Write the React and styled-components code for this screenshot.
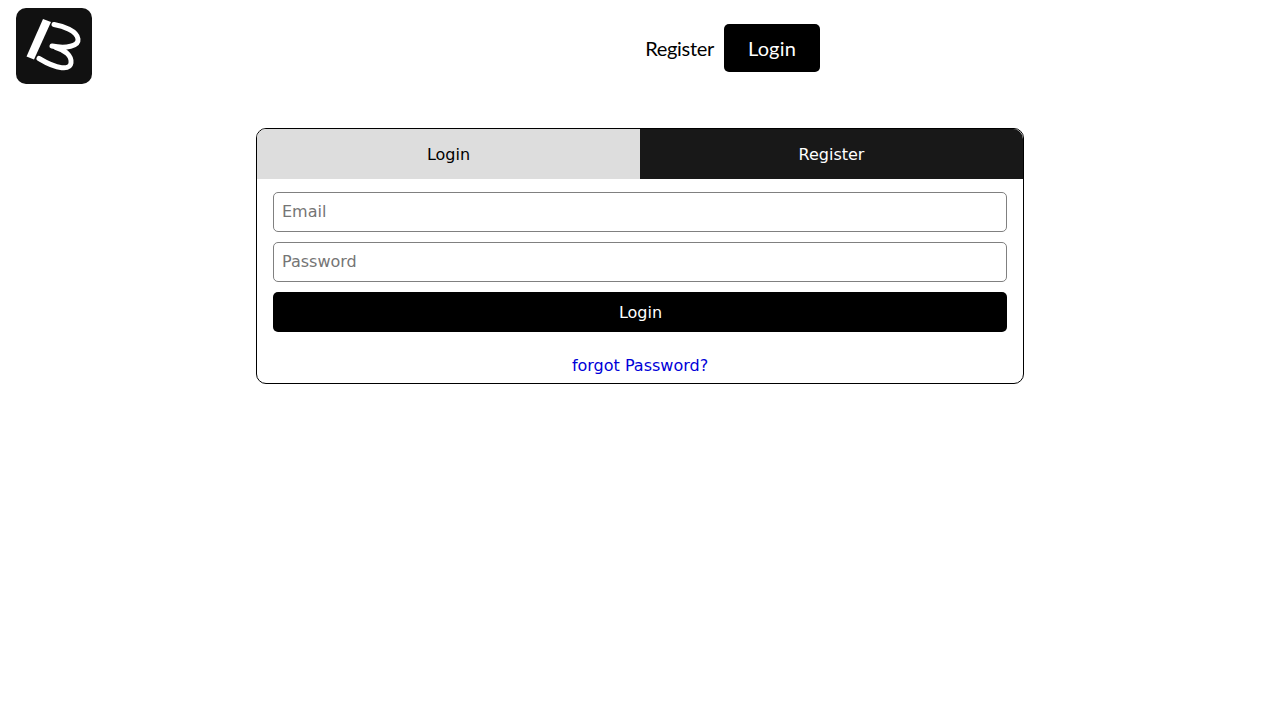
import React from 'react';
import styled, { createGlobalStyle } from 'styled-components';

const GlobalStyle = createGlobalStyle`
  body {
    margin: 0;
    background: #fff;
    font-family: "DejaVu Sans", sans-serif;
  }
`;

const Header = styled.header`
  display: flex;
  justify-content: space-between;
  align-items: flex-start;
  box-sizing: border-box;
  width: 820px;
  height: 92px;
  padding: 8px 0 0 16px;
`;

const Logo = styled.div`
  width: 76px;
  height: 76px;
  border-radius: 10px;
  background: #111;
`;

const Nav = styled.nav`
  display: flex;
  align-items: center;
  gap: 10px;
  margin-top: 16px;
`;

const NavLink = styled.a`
  margin-top: -1px;
  font-family: Lato, sans-serif;
  font-size: 20px;
  letter-spacing: -0.3px;
  color: #000;
`;

const NavButton = styled.button`
  width: 96px;
  height: 48px;
  padding: 0 0 1px;
  border: 0;
  border-radius: 5px;
  background: #000;
  color: #fff;
  font-family: Lato, sans-serif;
  font-size: 20px;
  letter-spacing: 0.2px;
`;

const Card = styled.main`
  box-sizing: border-box;
  width: 768px;
  height: 256px;
  margin: 36px auto 0;
  border: 1px solid #000;
  border-radius: 10px;
`;

const Tabs = styled.div`
  display: grid;
  grid-template-columns: 1fr 1fr;
  height: 50px;
`;

const Tab = styled.div`
  display: flex;
  align-items: center;
  justify-content: center;
  font-size: 16px;
  background: ${props => (props.$active ? '#ddd' : '#181818')};
  color: ${props => (props.$active ? '#000' : '#fff')};
  border-radius: ${props => (props.$active ? '9px 0 0 0' : '0 10px 0 0')};
`;

const Form = styled.form`
  display: flex;
  flex-direction: column;
  gap: 10px;
  padding: 13px 16px 0;
`;

const Input = styled.input`
  box-sizing: border-box;
  height: 40px;
  padding: 0 8px 2px;
  border: 1px solid #808080;
  border-radius: 5px;
  font-family: inherit;
  font-size: 16px;

  &::placeholder {
    color: #757575;
  }
`;

const Submit = styled.button`
  height: 40px;
  padding: 0 0 0 1px;
  border: 0;
  border-radius: 5px;
  background: #000;
  color: #fff;
  font-family: inherit;
  font-size: 16px;
`;

const Forgot = styled.a`
  display: block;
  margin-top: 24px;
  color: #0000d8;
  font-size: 16px;
  line-height: 20px;
  text-align: center;
`;

function LogoMark() {
  return (
    <Logo>
      <svg width="76" height="76" viewBox="0 0 76 76" fill="none">
        <path d="M27 11L35 14L18 51.5L10.5 48.5Z" fill="#fff" />
        <g stroke="#fff" strokeWidth="5" strokeLinecap="round">
          <path d="M38 16.5C47 18 61 23 62 31C63 38 50 41 36 38" />
          <path d="M40 39.5C49 42 56 48 55 55C54 62 42 62 23 50.5" />
        </g>
      </svg>
    </Logo>
  );
}

export default function App() {
  return (
    <>
      <GlobalStyle />
      <Header>
        <LogoMark />
        <Nav>
          <NavLink>Register</NavLink>
          <NavButton>Login</NavButton>
        </Nav>
      </Header>
      <Card>
        <Tabs>
          <Tab $active>Login</Tab>
          <Tab>Register</Tab>
        </Tabs>
        <Form>
          <Input placeholder="Email" />
          <Input placeholder="Password" />
          <Submit type="button">Login</Submit>
        </Form>
        <Forgot>forgot Password?</Forgot>
      </Card>
    </>
  );
}
